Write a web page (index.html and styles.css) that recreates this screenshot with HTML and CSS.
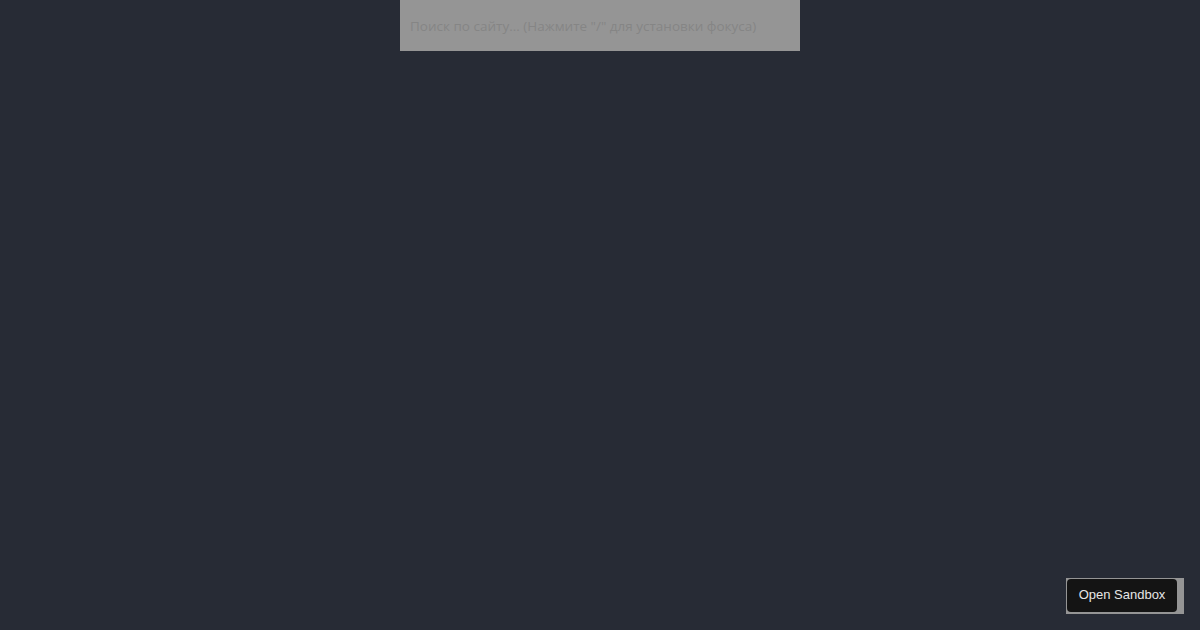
FILE: index.html
```html
<!DOCTYPE html>
<html lang="ru">
<head>
    <meta charset="UTF-8">
    <title>Поиск</title>
    <link rel="stylesheet" href="styles.css">
</head>
<body>
<div class="top">
    <input class="search" type="text" placeholder="Поиск по сайту... (Нажмите &quot;/&quot; для установки фокуса)">
</div>
<div class="sandbox">
    <a href="javascript:;" class="sandbox-btn">Open Sandbox</a>
</div>
</body>
</html>
```

FILE: styles.css
```css
*{margin: 0;padding: 0;box-sizing: border-box;}
html,body{height: 100%;}
body{background: #272b35;font-family: "Open Sans", "Liberation Sans", sans-serif;}
.top{display: flex;justify-content: center;}
.search{width: 400px;height: 51px;border: 0;outline: 0;background: #959595;padding: 1px 10px 0 10px;font-family: "Open Sans", "Noto Sans", sans-serif;font-size: 13.5px;color: #333;}
.search::placeholder{color: #858585;}
.sandbox{position: fixed;right: 16px;bottom: 16px;width: 118px;height: 36px;background: #959595;padding: 1px 7px 2px 1px;}
.sandbox-btn{display: flex;align-items: center;justify-content: center;height: 100%;padding-bottom: 2px;background: #141414;border-radius: 4px;color: #e6e6e6;text-decoration: none;font-family: "Liberation Sans", Arial, sans-serif;font-size: 13px;}
```
